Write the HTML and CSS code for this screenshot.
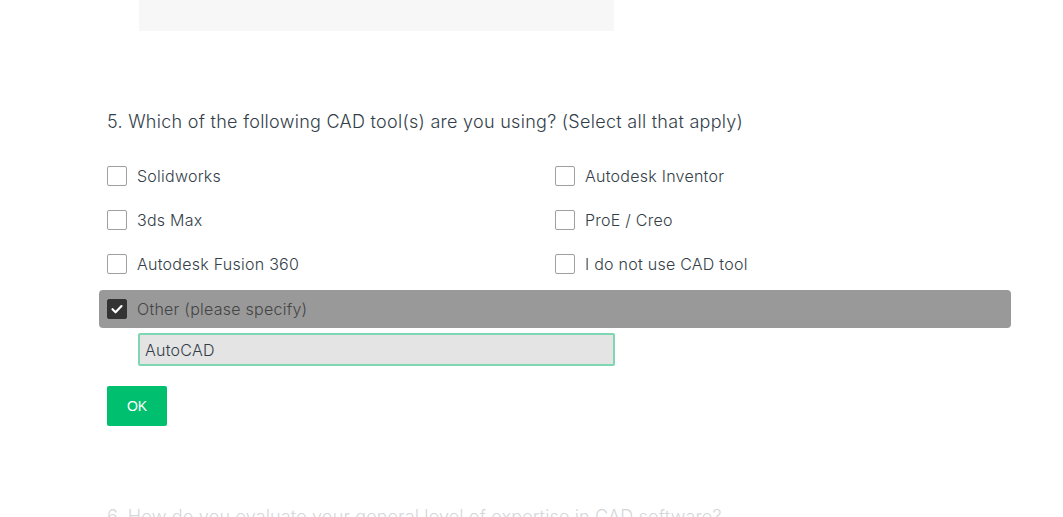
FILE: index.html
```html
<!DOCTYPE html>
<html>
<head>
<meta charset="utf-8">
<link rel="stylesheet" href="styles.css">
</head>
<body>
<div class="prev-block"></div>
<section class="question">
  <h2 class="q-title">5. Which of the following CAD tool(s) are you using? (Select all that apply)</h2>
  <div class="options">
    <label class="opt"><span class="box"></span><span class="lbl">Solidworks</span></label>
    <label class="opt"><span class="box"></span><span class="lbl">Autodesk Inventor</span></label>
    <label class="opt"><span class="box"></span><span class="lbl">3ds Max</span></label>
    <label class="opt"><span class="box"></span><span class="lbl">ProE / Creo</span></label>
    <label class="opt"><span class="box"></span><span class="lbl">Autodesk Fusion 360</span></label>
    <label class="opt"><span class="box"></span><span class="lbl">I do not use CAD tool</span></label>
    <label class="opt other"><span class="box checked"><svg viewBox="0 0 20 20" width="20" height="20"><path d="M5 10.3 L8.4 13.6 L15 6.8" fill="none" stroke="#fff" stroke-width="2.4" stroke-linecap="round" stroke-linejoin="round"/></svg></span><span class="lbl">Other (please specify)</span></label>
  </div>
  <div class="specify"><input class="specify-input" type="text" value="AutoCAD"></div>
  <button class="ok-btn">OK</button>
</section>
<section class="question next">
  <h2 class="q-title faded">6. How do you evaluate your general level of expertise in CAD software?</h2>
</section>
</body>
</html>
```
FILE: styles.css
```css
html, body {
  margin: 0;
  padding: 0;
  background: #fff;
}
body {
  font-family: "Inter", "Noto Sans", sans-serif;
  font-weight: 300;
  color: #333e48;
  width: 1063px;
  height: 517px;
  overflow: hidden;
}
.prev-block {
  margin-left: 139px;
  width: 475px;
  height: 31px;
  background: #f7f7f7;
}
.question {
  padding-left: 107px;
  width: 896px;
}
.q-title {
  margin: 0;
  font-size: 18px;
  font-weight: 300;
  line-height: 24px;
  letter-spacing: 0.28px;
  color: #333e48;
}
.question .q-title {
  padding-top: 79px;
}
.options {
  display: grid;
  grid-template-columns: 448px 448px;
  margin-top: 20px;
}
.opt {
  display: flex;
  align-items: center;
  height: 44px;
  font-size: 16px;
  letter-spacing: 0.25px;
}
.opt .box {
  width: 18px;
  height: 18px;
  border: 1px solid #a0a0a0;
  border-radius: 2px;
  background: #fff;
  flex: none;
  margin-right: 10px;
  display: flex;
  align-items: center;
  justify-content: center;
}
.opt .box.checked {
  background: #333;
  border-color: #333;
}
.opt .box.checked svg {
  display: block;
}
.opt.other {
  grid-column: 1 / span 2;
  background: #999;
  border-radius: 4px;
  height: 38px;
  margin: 4px -8px 5px;
  padding-left: 8px;
}
.opt.other .lbl {
  color: #444;
}
.specify {
  padding-left: 31px;
}
.specify-input {
  box-sizing: border-box;
  width: 477px;
  height: 33px;
  border: 2px solid #7fd6b2;
  border-radius: 2px;
  background: #e4e4e4;
  font-family: inherit;
  font-weight: 300;
  font-size: 16px;
  letter-spacing: 0.25px;
  color: #333e48;
  padding: 0 5px;
  outline: none;
  display: block;
}
.ok-btn {
  margin-top: 20px;
  width: 60px;
  height: 40px;
  background: #00bf6f;
  color: #fff;
  border: none;
  border-radius: 2px;
  font-family: "Liberation Sans", sans-serif;
  font-size: 14px;
  font-weight: 400;
  display: block;
  padding: 0;
}
.question.next .q-title {
  padding-top: 79px;
  letter-spacing: 0.15px;
}
.faded {
  color: #d4d7da !important;
}
```
